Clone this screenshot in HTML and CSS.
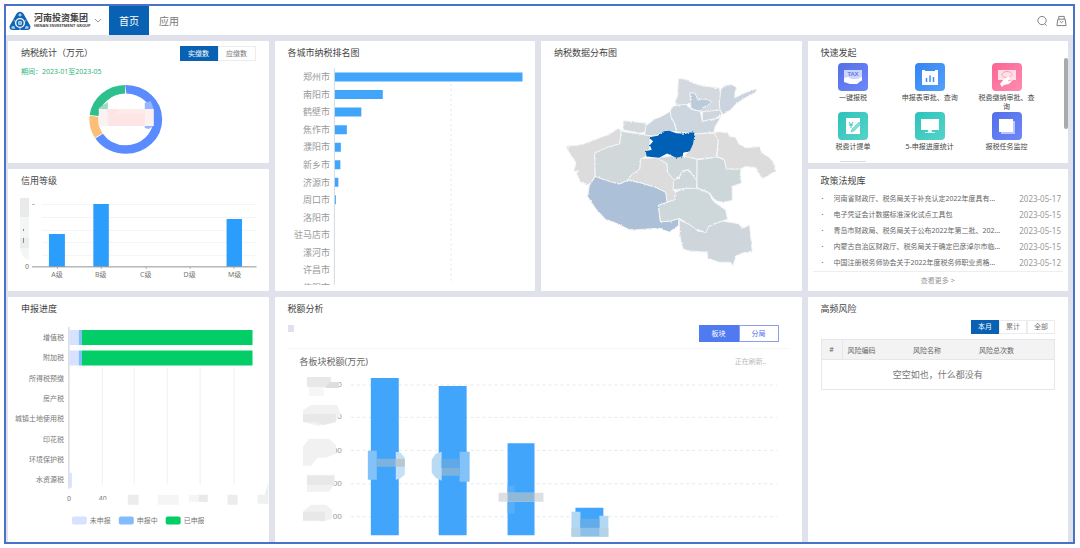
FILE: index.html
```html
<!DOCTYPE html>
<html lang="zh-CN">
<head>
<meta charset="utf-8">
<title>河南投资集团</title>
<link rel="stylesheet" href="styles.css">
</head>
<body>
<div class="frame">
  <header class="topbar">
    <a class="brand" href="#">
      <svg class="brand-mark" viewBox="0 0 66 58" aria-hidden="true">
        <path d="M33 1c5 0 9 3 11 7l19 34c3 6 1 14-7 14H10C2 56 0 48 3 42L22 8c2-4 6-7 11-7z" fill="#1265b3"/>
        <path d="M33 5l6 6-6 5-6-5zM7 46l8-3 4 9H8zM59 46l-8-3-4 9h11z" fill="#a9cdeb"/>
        <circle cx="33" cy="35" r="13" fill="none" stroke="#fff" stroke-width="4"/>
        <path d="M28 30h10v10H28z" fill="#fff"/><path d="M31 33h4v4h-4z" fill="#1265b3"/>
        <path d="M14 27l5 3M52 27l-5 3M33 50v6" stroke="#fff" stroke-width="2"/>
      </svg>
      <span class="brand-text"><b class="brand-name">河南投资集团</b><span class="brand-en">HENAN INVESTMENT GROUP</span></span>
      <svg class="chevron" viewBox="0 0 8 5" aria-hidden="true"><path d="M1 1l3 3 3-3" fill="none" stroke="#999" stroke-width="1"/></svg>
    </a>
    <nav class="nav">
      <a class="nav-item active" href="#">首页</a>
      <a class="nav-item" href="#">应用</a>
    </nav>
    <div class="tools">
      <button class="tool" aria-label="搜索"><svg viewBox="0 0 12 12"><circle cx="5.500" cy="5.500" r="4.500"/><path d="M8.500 9l2 2"/></svg></button>
      <button class="tool" aria-label="消息"><svg viewBox="0 0 12 12"><path d="M2 4h8l1 7H1zM3 4V1h6v3M4 6l2 2 2-2"/></svg></button>
    </div>
  </header>

  <main class="board">
    <section class="card">
      <div class="card-head"><h2>纳税统计（万元）</h2>
        <div class="seg"><button class="on">实缴数</button><button>应缴数</button></div>
      </div>
      <p class="period">期间：2023-01至2023-05</p>
      <svg class="chart" viewBox="8 78 261 84" role="img" aria-label="纳税统计">
        <g fill="none" stroke-width="9" transform="translate(126 119.500) scale(1 .945) rotate(-90)">
          <circle r="32" stroke="#5a8cff" pathLength="100" stroke-dasharray="65.700 34.300"/>
          <circle r="32" stroke="#fbbf77" pathLength="100" stroke-dasharray="10.600 89.400" stroke-dashoffset="-66.100"/>
          <circle r="32" stroke="#2bc08c" pathLength="100" stroke-dasharray="22.500 77.500" stroke-dashoffset="-77.100"/>
        </g>
        <path d="M99 108l9-6v9h-9z" fill="#9bdcc2"/><path d="M145 103l6-2 3 8v17l-5 3-4-1z" fill="#98b6ff"/>
        <path d="M99 109h55v17H99z" fill="#fdf0f1"/>
        <path d="M108 109h37v17h-37z" fill="#fde5e6"/><path d="M118 109h26v5h-26z" fill="#fdebec"/><path d="M99 117h9v9h-9z" fill="#fbf2f2"/>
      </svg>
    </section>

    <section class="card tall">
      <div class="card-head"><h2>各城市纳税排名图</h2></div>
      <svg class="chart" viewBox="275 61 261 224" role="img" aria-label="各城市纳税排名图">
        <path d="M334.500 68v217" stroke="#d5d9e0" fill="none"/>
        <path d="M451.500 84v200" stroke="#e3e5ea" stroke-dasharray="2 3" fill="none"/>
        <g fill="#42a5fc">
          <path d="M335 72.500h188v9H335zM335 90h48v9h-48zM335 107.500h26.500v9H335zM335 125.500h12v9h-12zM335 143h6v9h-6zM335 160.500h5.500v9H335zM335 178h3.500v9H335zM335 195.500h1v9h-1z"/>
        </g>
        <g class="t9 end muted">
          <text x="330" y="80">郑州市</text><text x="330" y="98">南阳市</text><text x="330" y="115">鹤壁市</text><text x="330" y="133">焦作市</text><text x="330" y="150">濮阳市</text><text x="330" y="168">新乡市</text><text x="330" y="186">济源市</text><text x="330" y="203">周口市</text><text x="330" y="221">洛阳市</text><text x="330" y="238">驻马店市</text><text x="330" y="256">漯河市</text><text x="330" y="273">许昌市</text><text x="330" y="291">信阳市</text>
        </g>
      </svg>
    </section>

    <section class="card tall">
      <div class="card-head"><h2>纳税数据分布图</h2></div>
      <svg class="chart" viewBox="5 75 783 690" role="img" aria-label="纳税数据分布图">
        <defs>
          <filter id="coast" x="-5%" y="-5%" width="110%" height="110%">
            <feTurbulence type="fractalNoise" baseFrequency="0.2" numOctaves="2" seed="4" result="n"/>
            <feDisplacementMap in="SourceGraphic" in2="n" scale="7" xChannelSelector="R" yChannelSelector="G"/>
          </filter>
        </defs>
        <g filter="url(#coast)">
        <g stroke="#f4f5f7" stroke-width="3" stroke-linejoin="round">
          <path fill="#d3d9de" d="M418 127L446 131 462 141 492 150 541 156 546 180 541 205 545 225 490 228 456 220 452 202 440 205 412 208 408 195 415 180z"/>
          <path fill="#bacbd9" d="M453 170L468 172 476 190 500 190 519 196 508 208 490 216 484 226 456 220z"/>
          <path fill="#ced6dc" d="M490 228L545 222 548 236 530 248 490 256z"/>
          <path fill="#cbd3de" d="M546 160L560 148 580 146 594 156 588 168 588 185 620 170 654 158 650 170 622 184 590 205 575 222 552 236 543 222 541 200z"/>
          <path fill="#cdd5df" d="M404 210L440 205 456 220 484 226 490 256 535 248 548 240 530 270 524 290 466 294 412 288 406 262 394 240 394 222z"/>
          <path fill="#ccd5dd" d="M318 272L345 250 370 240 394 226 396 244 406 262 412 288 380 286 350 300 318 300z"/>
          <path fill="#d3d9dc" d="M252 254L290 258 322 262 318 290 300 292 252 282z"/>
          <path fill="#dcdcdd" d="M80 332L130 326 165 312 210 296 236 278 246 284 242 324 206 334 166 352 166 385 168 420 150 448 122 438 112 412 118 404 104 408 110 380 90 350z"/>
          <path fill="#d0d8da" d="M246 284L256 288 312 296 334 300 330 350 318 362 305 372 302 400 278 416 265 434 240 445 200 434 168 422 166 352 206 334 242 324z"/>
          <path fill="#dcdcdd" d="M305 368L355 366 384 384 386 410 408 430 402 462 410 468 406 495 384 498 380 470 350 455 300 440 265 434 278 416 302 400z"/>
          <path fill="#acc0d8" d="M168 422L200 434 240 445 265 434 300 440 350 455 380 470 384 500 358 510 364 558 395 556 420 548 418 570 390 590 365 578 325 580 275 584 225 560 200 552 170 520 145 482 150 450z"/>
          <path fill="#ced7da" d="M355 366L400 360 440 362 474 370 474 436 466 425 450 402 430 405 420 424 404 432 386 410 384 384z"/>
          <path fill="#ced7da" d="M404 432L420 428 428 408 448 402 466 425 474 436 472 458 440 458 402 462z"/>
          <path fill="#dcdcdd" d="M464 294L530 292 538 312 532 364 474 370 436 362 462 325z"/>
          <path fill="#dcdcdd" d="M524 290L540 288 566 290 572 302 590 304 600 325 622 336 660 332 670 352 690 364 702 376 712 405 670 430 650 396 620 392 605 400 562 400 555 370 534 362 538 312z"/>
          <path fill="#cdd6d9" d="M474 372L534 364 556 372 562 400 606 400 604 420 608 442 580 452 580 494 550 500 528 494 510 470 474 456z"/>
          <path fill="#ced7da" d="M358 508L384 500 406 492 410 468 440 458 472 458 510 472 524 498 560 522 566 552 530 562 510 572 500 590 470 580 450 566 420 548 395 556 364 558z"/>
          <path fill="#ced6db" d="M420 552L450 566 478 586 500 590 510 572 550 556 600 564 610 578 632 568 640 648 612 652 592 660 582 690 574 680 540 680 506 668 506 650 450 646 432 640 422 600z"/>
        </g>
        <path fill="#0461b5" d="M328 304L356 300 374 286 390 285 412 292 440 294 452 290 466 290 466 302 462 325 452 346 434 350 430 362 412 366 384 353 360 366 322 362 320 346 338 342 332 328 342 316z"/>
        </g>
      </svg>
    </section>

    <section class="card launch">
      <div class="card-head"><h2>快速发起</h2></div>
      <div class="launch-grid">
        <a class="app" href="#"><span class="app-icon indigo"><svg viewBox="0 0 30 28"><path d="M6 7h18v11H6z" fill="#cdd5ff"/><text x="15" y="13" class="tax">TAX</text><path d="M6 15l4-1 4 2h5l5-2v3l-5 4h-7l-6-2z" fill="#fff"/></svg></span>一键报税</a>
        <a class="app" href="#"><span class="app-icon blue"><svg viewBox="0 0 30 28"><path d="M7 7h16v15H7z" fill="#fff"/><path d="M10 7h10v1H10z" fill="#3c8df5"/><path d="M11.500 15v4M15 12.500V19M18.500 14v5" stroke="#3c8df5" stroke-width="1.500"/></svg></span>申报表审批、查询</a>
        <a class="app" href="#"><span class="app-icon pink"><svg viewBox="0 0 30 28"><path d="M6 7h18v10H6z" fill="#ffdfe9"/><ellipse cx="15" cy="11.500" rx="5" ry="3" fill="none" stroke="#ff9ab8"/><path d="M8 21l4-5 5-3 1 2-2 3 5-1-4 4-5 1-2 2z" fill="#fff"/></svg></span>税费缴纳审批、查询</a>
        <a class="app" href="#"><span class="app-icon teal"><svg viewBox="0 0 30 28"><path d="M8 6h14v16H8z" fill="#fff"/><path d="M11 10l2 3 2-3M13 13v3M11 13h4" fill="none" stroke="#38c8bd"/><path d="M13 20l1-3 7-7 2 2-7 7z" fill="#8bdcd6" stroke="#38c8bd" stroke-width=".5"/></svg></span>税费计提单</a>
        <a class="app" href="#"><span class="app-icon teal"><svg viewBox="0 0 30 28"><path d="M6 7h18v11H6z" fill="#fff"/><path d="M13 18h4v2h3v1H10v-1h3z" fill="#d8f6f2"/></svg></span>5-申报进度统计</a>
        <a class="app" href="#"><span class="app-icon indigo"><svg viewBox="0 0 30 28"><path d="M9 9h14v13H9z" fill="#b9c6ff"/><path d="M7 7h14v13H7z" fill="#fff"/></svg></span>报税任务监控</a>
        <span class="next-row"></span>
      </div>
      <span class="scroll-thumb"></span>
    </section>

    <section class="card">
      <div class="card-head"><h2>信用等级</h2></div>
      <svg class="chart" viewBox="8 189 261 102" role="img" aria-label="信用等级">
        <path d="M42 204.500h215M42 217.500h215M42 230.500h215M42 242.500h215M42 255.500h215" stroke="#f3f4f6" fill="none"/>
        <path d="M32 204.500h3" stroke="#bbb"/>
        <path d="M20 198h9v62q-9-2-9-16z" fill="#f4f5f5"/><path d="M20 198h9v19h-9z" fill="#e9ebeb"/><path d="M20 238h9v10h-9z" fill="#ebecec"/>
        <path d="M23.500 229v2M23.500 238v5" stroke="#888"/>
        <path d="M49 234h16v33H49zM93.500 204H109v63H93.500zM227 219h15.500v48H227z" fill="#2b9dfc"/>
        <path d="M32 267h225" stroke="#8f9296" fill="none"/>
        <path d="M57.500 267v2M101.500 267v2M146.500 267v2M190.500 267v2M234.500 267v2" stroke="#aaa"/>
        <g class="t7 mid dark"><text x="27" y="269">0</text><text x="57" y="277">A级</text><text x="101" y="277">B级</text><text x="146" y="277">C级</text><text x="190" y="277">D级</text><text x="235" y="277">M级</text></g>
      </svg>
    </section>

    <section class="card policy">
      <div class="card-head"><h2>政策法规库</h2></div>
      <ul class="news">
        <li><a href="#">河南省财政厅、税务局关于补充认定2022年度具有...</a><time>2023-05-17</time></li>
        <li><a href="#">电子凭证会计数据标准深化试点工具包</a><time>2023-05-15</time></li>
        <li><a href="#">青岛市财政局、税务局关于公布2022年第二批、202...</a><time>2023-05-15</time></li>
        <li><a href="#">内蒙古自治区财政厅、税务局关于确定巴彦淖尔市临...</a><time>2023-05-15</time></li>
        <li><a href="#">中国注册税务师协会关于2022年度税务师职业资格...</a><time>2023-05-12</time></li>
      </ul>
      <a class="more" href="#">查看更多 &gt;</a>
    </section>

    <section class="card">
      <div class="card-head"><h2>申报进度</h2></div>
      <svg class="chart" viewBox="8 317 261 225" role="img" aria-label="申报进度">
        <path d="M102.500 368v117M134.500 368v117M167.500 368v117M200.500 368v117M234.500 368v117" stroke="#eff0f2" fill="none"/>
        <path d="M69 327v162" stroke="#c9ccd0" fill="none"/>
        <path d="M69.500 330H79v15h-9.500zM69.500 350.500H79v15h-9.500zM69.500 473h2.500v15h-2.500z" fill="#d6e2ff"/>
        <path d="M79 330h3v15h-3zM79 350.500h3v15h-3z" fill="#82bcff"/>
        <path d="M82 330h171v15H82zM82 350.500h171v15H82z" fill="#03cd66"/>
        <g class="t7 end dark"><text x="64" y="340">增值税</text><text x="64" y="360">附加税</text><text x="64" y="381">所得税预缴</text><text x="64" y="401">房产税</text><text x="64" y="421">城镇土地使用税</text><text x="64" y="442">印花税</text><text x="64" y="462">环境保护税</text><text x="64" y="482">水资源税</text></g>
        <g class="t7 mid dark"><text x="69" y="501">0</text><text x="103" y="501">40</text></g>
        <path d="M96 500h16v4H96z" fill="#fff"/>
        <path d="M128 495h11v10h-11zM228 495h10v10h-10z" fill="#ececec"/><path d="M158 495h21v10h-21zM189 495h19v7h-19z" fill="#f5f5f5"/><path d="M199 495h9v7h-9z" fill="#e9e9e9"/><path d="M258 495h7l4-13v22h-11z" fill="#eff0f1"/>
        <rect x="72" y="517" width="15" height="8" rx="2" fill="#d6e2ff"/><rect x="119" y="517" width="15" height="8" rx="2" fill="#82bcff"/><rect x="166" y="517" width="15" height="8" rx="2" fill="#03cd66"/>
        <g class="t7 dark"><text x="90" y="523">未申报</text><text x="137" y="523">申报中</text><text x="184" y="523">已申报</text></g>
      </svg>
    </section>

    <section class="card wide">
      <div class="card-head"><h2>税额分析</h2></div>
      <div class="toolbar"><span class="chip"></span><div class="seg outline"><button class="on">板块</button><button>分局</button></div></div>
      <div class="sub-head"><h3>各板块税额(万元)</h3><span class="status">正在刷新..</span></div>
      <svg class="chart" viewBox="275 373 528 169" role="img" aria-label="各板块税额">
        <path d="M351 385h427M351 417.500h427M351 450.500h427M351 484h427M351 517h427" stroke="#e6e8eb" stroke-dasharray="3 3" fill="none"/>
        <g class="t8 end muted"><text x="342" y="387">0</text><text x="342" y="419">00</text><text x="342" y="453">00</text><text x="342" y="486">00</text><text x="342" y="519">00</text></g>
        <path d="M303 410l8-5h26l4 9-6 8-16 4-16-4zM303 447l6-8h20l7 6v9l-10 4h-8l-7 8h-8zM307 475h28v9l-6 8h-22zM303 512l8-7h15l6 5v9l-10 3-8-3h-11z" fill="#f1f1f1"/>
        <path d="M307 377h24v10h-24zM303 414h33v8l-12 3-8-3h-13zM307 476h27v9h-27zM303 512h22v9h-22z" fill="#e8e8e8"/><path d="M309 387h15v9h-15z" fill="#f6f6f6"/><path d="M325 388l5-6h9v6z" fill="#dedede"/><path d="M304 370h12v1h-12z" fill="#f0f0f0"/>
        <path d="M371 378h28v157.500h-28zM439 386h28v149.500h-28zM508 443.500h27v92h-27zM576 508h28v27.500h-28z" fill="#42a5fc"/>
        <path d="M368 451h9v29h-9zM460 452h10v30h-10z" fill="#83c1f9"/><path d="M377 459h19v8h-19zM441 468h19v8h-19z" fill="#7db2dc"/><path d="M396 452l5 1 4 5v17l-5 4-4 1z" fill="#c3e0f7"/><path d="M396 459h9v8h-9z" fill="#b7c8d2"/>
        <path d="M442 452v29l-6-3-4-5v-13l4-6z" fill="#b7daf5"/><path d="M442 459h18v9h-18z" fill="#5fa9e7"/>
        <path d="M508 486h7v28h-7z" fill="#58adf8"/><path d="M499 493h45v9h-45z" fill="#dce0e3"/><path d="M508 493h27v9h-27z" fill="#8fb9d6"/>
        <path d="M572 512h9v25h-9zM600 516h9v21h-9z" fill="#b3d8f4"/><path d="M581 519h19v9h-19z" fill="#62ade9"/><path d="M581 528h19v9h-19z" fill="#8cc0e8"/><path d="M572 528h9v9h-9zM600 528h9v9h-9z" fill="#b4d3e6"/>
      </svg>
    </section>

    <section class="card">
      <div class="card-head"><h2>高频风险</h2></div>
      <div class="risk">
        <div class="seg small"><button class="on">本月</button><button>累计</button><button>全部</button></div>
        <table>
          <thead><tr><th class="num">#</th><th class="col">风险编码</th><th class="col">风险名称</th><th>风险总次数</th></tr></thead>
          <tbody><tr><td colspan="4">空空如也，什么都没有</td></tr></tbody>
        </table>
      </div>
    </section>
  </main>
</div>
</body>
</html>
```
FILE: styles.css
```css
* { box-sizing: border-box; }
body { margin: 0; background: #fff; color: #444; font-family: "Noto Sans", "Noto Sans CJK SC", sans-serif; font-size: 7px; }
h2, h3, p, ul { margin: 0; padding: 0; font-weight: 400; }
a { color: inherit; text-decoration: none; }
button { font: inherit; color: inherit; padding: 0; border: 0; background: none; cursor: pointer; }
svg { display: block; }

.frame { margin: 4px 5px 4px 4px; border: 2px solid #4a72c8; background: #dfe2eb; }
.topbar { display: flex; align-items: stretch; height: 29px; background: #fff; }
.brand { display: flex; align-items: center; width: 103px; padding-left: 3px; gap: 3px; }
.brand-mark { width: 22px; height: 20px; flex: none; }
.brand-text { display: flex; flex-direction: column; white-space: nowrap; color: #444; }
.brand-name { font-size: 9px; line-height: 10px; }
.brand-en { font-size: 4px; line-height: 5px; font-weight: 700; }
.chevron { width: 8px; height: 5px; }
.nav { display: flex; }
.nav-item { display: flex; align-items: center; padding: 0 10px; font-size: 10px; color: #777; }
.nav-item.active { background: #0861b2; color: #fff; }
.tools { display: flex; align-items: center; gap: 8px; margin-left: auto; padding-right: 6px; }
.tool svg { width: 11px; height: 12px; fill: none; stroke: #777; stroke-width: 1; }

.board { display: grid; grid-template-columns: repeat(4, minmax(0, 1fr)); grid-template-rows: minmax(122px, auto) minmax(122px, auto) minmax(245px, auto); gap: 6px; padding: 6px 5px 0 2px; }
.card { position: relative; background: #fff; overflow: hidden; border-radius: 1px; }
.tall { grid-row: span 2; }
.wide { grid-column: span 2; }
.card-head { display: flex; justify-content: space-between; align-items: center; height: 20px; padding: 4px 13px 0; }
.card-head h2 { font-size: 9px; line-height: 16px; color: #444; }
.chart { width: 100%; height: auto; }
.chart text { font-family: "Noto Sans", "Noto Sans CJK SC", sans-serif; }
.t7 { font-size: 7px; }
.t8 { font-size: 8px; }
.t9 { font-size: 9px; }
.end { text-anchor: end; }
.mid { text-anchor: middle; }
.muted { fill: #999; }
.dark { fill: #777; }

.seg { display: flex; }
.seg button { width: 38px; height: 15px; border: 1px solid #ececef; line-height: 13px; color: #777; }
.seg .on { background: #0861b2; border-color: #0861b2; color: #fff; }
.seg.small button { width: 28px; height: 14px; line-height: 12px; }
.seg.outline button { width: 40px; height: 17px; border-color: #8b9ff0; color: #4d6fe8; }
.seg.outline .on { background: #4f7af0; border-color: #4f7af0; color: #fff; }
.period { padding: 5px 13px 0; line-height: 12px; color: #2fb47c; }

.launch-grid { display: grid; grid-template-columns: repeat(3, 1fr); padding: 2px 23px 0 7px; }
.app { display: flex; flex-direction: column; align-items: center; height: 49px; padding: 0 8px; line-height: 9px; text-align: center; color: #444; }
.app-icon { width: 30px; height: 28px; margin-bottom: 2px; border-radius: 4px; }
.indigo { background: linear-gradient(135deg, #5470e6, #6e86fa); }
.blue { background: linear-gradient(135deg, #3384f3, #55a2fa); }
.pink { background: linear-gradient(135deg, #fc6695, #ff8cae); }
.teal { background: linear-gradient(135deg, #2dc3bb, #56d3c8); }
.tax { font-size: 6px; font-weight: 700; text-anchor: middle; fill: #6b80ea; }
.next-row { justify-self: center; width: 26px; height: 1px; background: #ddd; }
.scroll-thumb { position: absolute; top: 17px; right: 0; width: 4px; height: 71px; border-radius: 2px; background: #aaa; }

.news { list-style: none; padding: 1px 7px 1px 14px; }
.news li { display: flex; align-items: center; height: 16px; white-space: nowrap; }
.news li::before { content: "·"; width: 12px; flex: none; }
.news a { flex: 1; min-width: 0; overflow: hidden; color: #666; }
.news time { font-size: 8px; color: #999; }
.more { display: block; margin: 0 5px; border-top: 1px solid #eee; line-height: 17px; text-align: center; color: #999; }

.toolbar { display: flex; justify-content: space-between; align-items: flex-start; height: 32px; margin: 0 13px; padding: 8px 10px 0 0; border-bottom: 1px solid #f4f5f8; }
.chip { width: 6px; height: 7px; background: #dfe1ef; }
.sub-head { display: flex; justify-content: space-between; align-items: center; height: 24px; padding: 0 35px 0 25px; }
.sub-head h3 { font-size: 9px; color: #666; }
.status { color: #bbb; }

.risk { display: flex; flex-direction: column; align-items: flex-end; gap: 5px; padding: 3px 13px 0; }
.risk table { width: 100%; border-collapse: collapse; table-layout: fixed; border: 1px solid #e6e7ea; }
.risk th { height: 20px; padding: 0 5px; background: #f3f3f4; font-weight: 400; text-align: left; color: #666; border-bottom: 1px solid #e6e7ea; }
.risk .num { width: 21px; padding: 0; text-align: center; border-right: 1px solid #e6e7ea; }
.risk .col { width: 66px; }
.risk td { height: 30px; padding: 0; text-align: center; font-size: 9px; color: #777; }
```
